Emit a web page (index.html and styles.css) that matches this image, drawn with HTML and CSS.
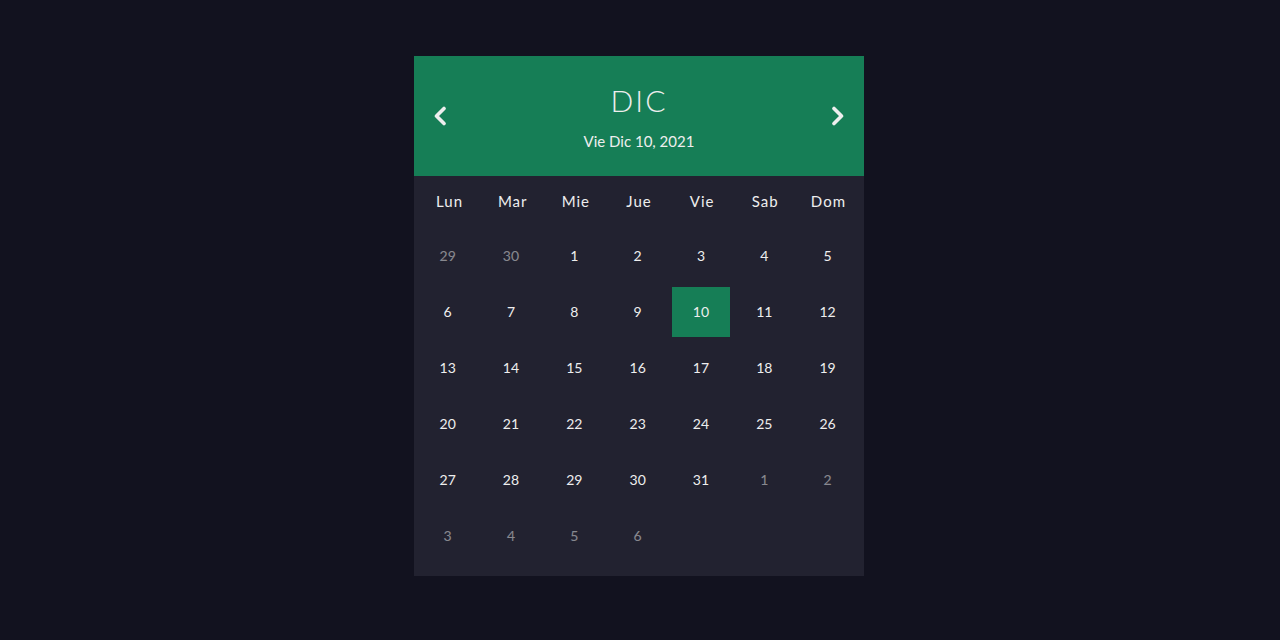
FILE: index.html
```html
<!DOCTYPE html>
<html lang="es">
<head>
<meta charset="utf-8">
<title>Calendario</title>
<link rel="stylesheet" href="styles.css">
</head>
<body>
<div class="container">
  <div class="calendar">
    <div class="month">
      <svg class="nav" width="14" height="20" viewBox="0 0 14 20"><polyline points="11,2.5 3.5,10 11,17.5" fill="none" stroke="#eee" stroke-width="3.6" stroke-linecap="round" stroke-linejoin="round"/></svg>
      <div class="date">
        <h1>Dic</h1>
        <p>Vie Dic 10, 2021</p>
      </div>
      <svg class="nav" width="14" height="20" viewBox="0 0 14 20"><polyline points="3,2.5 10.5,10 3,17.5" fill="none" stroke="#eee" stroke-width="3.6" stroke-linecap="round" stroke-linejoin="round"/></svg>
    </div>
    <div class="weekdays">
      <div>Lun</div><div>Mar</div><div>Mie</div><div>Jue</div><div>Vie</div><div>Sab</div><div>Dom</div>
    </div>
    <div class="days">
      <div class="prev-date">29</div><div class="prev-date">30</div>
      <div>1</div><div>2</div><div>3</div><div>4</div><div>5</div>
      <div>6</div><div>7</div><div>8</div><div>9</div><div class="today">10</div><div>11</div><div>12</div>
      <div>13</div><div>14</div><div>15</div><div>16</div><div>17</div><div>18</div><div>19</div>
      <div>20</div><div>21</div><div>22</div><div>23</div><div>24</div><div>25</div><div>26</div>
      <div>27</div><div>28</div><div>29</div><div>30</div><div>31</div>
      <div class="next-date">1</div><div class="next-date">2</div>
      <div class="next-date">3</div><div class="next-date">4</div><div class="next-date">5</div><div class="next-date">6</div>
    </div>
  </div>
</div>
</body>
</html>
```
FILE: styles.css
```css
* { margin: 0; padding: 0; box-sizing: border-box; }
body {
  background: #12121f;
  font-family: Lato, "Noto Sans", sans-serif;
  color: #eee;
}
.container {
  height: 640px;
  display: flex;
  justify-content: center;
  align-items: flex-start;
  padding: 56px 2px 0 0;
}
.calendar {
  width: 450px;
  height: 520px;
  background: #222230;
}
.month {
  height: 120px;
  background: #167e56;
  display: flex;
  justify-content: space-between;
  align-items: center;
  padding: 0 19px;
  text-align: center;
}
.nav { display: block; }
.date h1 {
  font-size: 30px;
  font-weight: 300;
  text-transform: uppercase;
  letter-spacing: 2px;
  line-height: 36px;
  margin-top: 1px;
  margin-bottom: 13px;
}
.date p { font-size: 15px; line-height: 20px; }
.weekdays {
  height: 50px;
  padding: 0 4px;
  display: flex;
  align-items: center;
}
.weekdays div {
  width: 63.33px;
  font-size: 15px;
  letter-spacing: 1px;
  display: flex;
  justify-content: center;
}
.days {
  display: flex;
  flex-wrap: wrap;
  padding: 2px 2px 2px 2px;
}
.days div {
  font-size: 14px;
  margin: 3px;
  width: 57.33px;
  height: 50px;
  display: flex;
  justify-content: center;
  align-items: center;
  line-height: 1;
}
.prev-date, .next-date { opacity: 0.5; }
.days .today { background: #167e56; }
```
